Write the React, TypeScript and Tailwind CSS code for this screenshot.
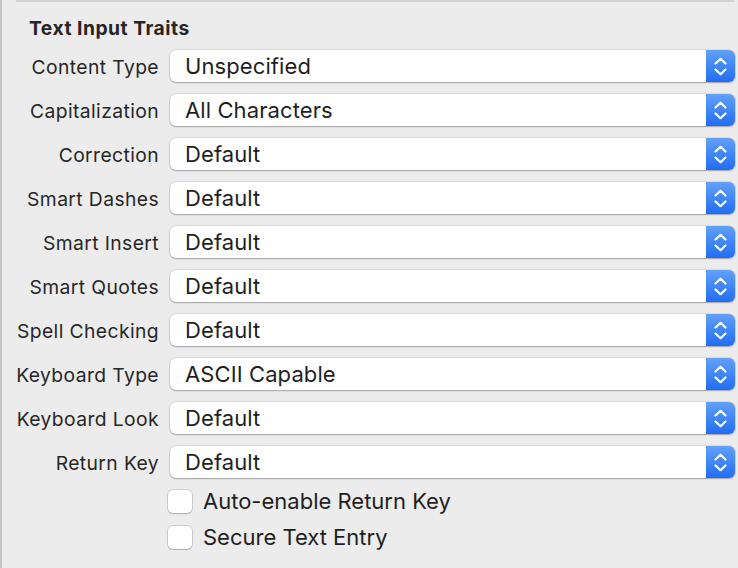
import React from "react";

const rows: [string, string][] = [
  ["Content Type", "Unspecified"],
  ["Capitalization", "All Characters"],
  ["Correction", "Default"],
  ["Smart Dashes", "Default"],
  ["Smart Insert", "Default"],
  ["Smart Quotes", "Default"],
  ["Spell Checking", "Default"],
  ["Keyboard Type", "ASCII Capable"],
  ["Keyboard Look", "Default"],
  ["Return Key", "Default"],
];

function Stepper() {
  return (
    <div className="flex h-full w-[29px] flex-col items-center justify-center gap-[3px] rounded-r-[6px] bg-gradient-to-b from-[#62a0f9] to-[#1f6cf4]">
      <svg width="13" height="8" viewBox="0 0 13 8" fill="none">
        <path d="M1.5 6.5 L6.5 1.8 L11.5 6.5" stroke="white" strokeWidth="2.2" strokeLinecap="round" strokeLinejoin="round" />
      </svg>
      <svg width="13" height="8" viewBox="0 0 13 8" fill="none">
        <path d="M1.5 1.5 L6.5 6.2 L11.5 1.5" stroke="white" strokeWidth="2.2" strokeLinecap="round" strokeLinejoin="round" />
      </svg>
    </div>
  );
}

function Popup({ value }: { value: string }) {
  return (
    <div className="flex h-[32px] w-[565px] items-stretch rounded-[6px] bg-white shadow-[0_0_0_1px_rgba(0,0,0,0.08),0_1px_1.5px_rgba(0,0,0,0.25)]">
      <div className="flex flex-1 items-center pl-[15px] pt-[1px] text-[22px] tracking-[0.1px] text-[#1f1f1f]">{value}</div>
      <Stepper />
    </div>
  );
}

function Checkbox({ label }: { label: string }) {
  return (
    <div className="flex h-[23px] items-center gap-[11px]">
      <div className="h-[23px] w-[24px] rounded-[5px] bg-white shadow-[0_0_0_1px_rgba(0,0,0,0.13),0_1px_1px_rgba(0,0,0,0.15)]" />
      <span className="text-[22px] text-[#1f1f1f]">{label}</span>
    </div>
  );
}

export default function App() {
  return (
    <div
      className="h-[568px] w-[738px] overflow-hidden border-l-[2px] border-[#c4c4c4] bg-[#ececec]"
      style={{ fontFamily: "Inter, 'Noto Sans', sans-serif" }}
    >
      <div className="ml-[14px] mr-[4px] h-[2px] bg-[#d2d2d2]" />
      <div className="pl-[27px] pt-[14px] text-[19.3px] font-bold leading-[24px] tracking-[0.5px] text-[#262626]">
        Text Input Traits
      </div>
      <div className="mt-[10px] flex flex-col gap-[12px]">
        {rows.map(([label, value]) => (
          <div key={label} className="flex items-center gap-[11px]">
            <div className="w-[157px] pt-[2px] text-right text-[19.3px] tracking-[0.4px] text-[#262626]">{label}</div>
            <Popup value={value} />
          </div>
        ))}
      </div>
      <div className="mt-[12px] flex flex-col gap-[13px] pl-[166px]">
        <Checkbox label="Auto-enable Return Key" />
        <Checkbox label="Secure Text Entry" />
      </div>
    </div>
  );
}
